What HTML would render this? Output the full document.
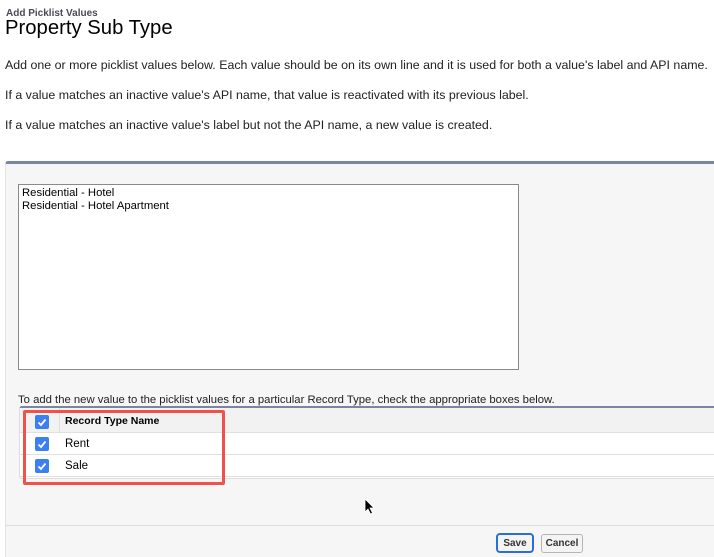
<!DOCTYPE html>
<html><head><style>
body{margin:0;width:714px;height:557px;background:#fff;font-family:"Liberation Sans",Arial,sans-serif;color:#000;position:relative;overflow:hidden}
.a{position:absolute;white-space:nowrap}
p{margin:0}
</style></head><body>
<div class="a" style="left:6px;top:8px;font-size:10px;font-weight:bold;color:#4a4a56">Add Picklist Values</div>
<div class="a" style="left:5px;top:17px;font-size:20.3px">Property Sub Type</div>
<div class="a" style="left:5px;top:58px;font-size:12.4px;color:#222">Add one or more picklist values below. Each value should be on its own line and it is used for both a value's label and API name.</div>
<div class="a" style="left:5px;top:88px;font-size:12.4px;color:#222">If a value matches an inactive value's API name, that value is reactivated with its previous label.</div>
<div class="a" style="left:5px;top:118px;font-size:12.4px;color:#222">If a value matches an inactive value's label but not the API name, a new value is created.</div>
<div class="a" style="left:5px;top:161px;width:709px;height:396px;background:#f6f6f6;border-top:3px solid #7b84a0;border-left:1px solid #e2e2e2;box-sizing:border-box;border-radius:3px 0 0 0"></div>
<div class="a" style="left:18px;top:184px;width:501px;height:186px;background:#fff;border:1px solid #8a8a8a;box-sizing:border-box;font-size:11.3px;padding:2px 3px;line-height:13px">Residential - Hotel<br>Residential - Hotel Apartment</div>
<div class="a" style="left:18px;top:394px;font-size:11.3px;color:#222">To add the new value to the picklist values for a particular Record Type, check the appropriate boxes below.</div>
<div class="a" style="left:19px;top:406px;width:695px;height:73px;background:#fff;border-top:2px solid #7b84a0;border-left:1px solid #ddd;border-bottom:1px solid #ddd;box-sizing:border-box;border-radius:3px 0 0 3px"></div>
<div class="a" style="left:20px;top:408px;width:694px;height:24px;background:#f2f2f2;border-bottom:1px solid #e0e0e0"></div>
<div class="a" style="left:59px;top:408px;width:1px;height:24px;background:#e0e0e0"></div>
<div class="a" style="left:20px;top:454px;width:694px;height:1px;background:#e0e0e0"></div>
<div class="a" style="left:20px;top:476px;width:694px;height:1px;background:#e0e0e0"></div>
<div class="a" style="left:65px;top:415px;font-size:10.5px;font-weight:bold">Record Type Name</div>
<div class="a" style="left:65px;top:438px;font-size:11.5px">Rent</div>
<div class="a" style="left:65px;top:460px;font-size:11.5px">Sale</div>
<svg class="a" style="left:35px;top:415px" width="14" height="14"><rect width="14" height="14" rx="2" fill="#3b7ff0"/><path d="M3.5 7.5l2.5 2.5 4.5-5.5" stroke="#fff" stroke-width="1.8" fill="none"/></svg>
<svg class="a" style="left:35px;top:437px" width="14" height="14"><rect width="14" height="14" rx="2" fill="#3b7ff0"/><path d="M3.5 7.5l2.5 2.5 4.5-5.5" stroke="#fff" stroke-width="1.8" fill="none"/></svg>
<svg class="a" style="left:35px;top:459px" width="14" height="14"><rect width="14" height="14" rx="2" fill="#3b7ff0"/><path d="M3.5 7.5l2.5 2.5 4.5-5.5" stroke="#fff" stroke-width="1.8" fill="none"/></svg>
<div class="a" style="left:23px;top:410px;width:202px;height:75px;border:3px solid #f0514b;box-sizing:border-box;border-radius:2px"></div>
<div class="a" style="left:6px;top:525px;width:708px;height:1px;background:#dcdcdc"></div>
<svg class="a" style="left:364px;top:498px" width="12" height="18"><path d="M1 1v13l3-3 2.5 5 2-1-2.5-5h4z" fill="#000" stroke="#fff" stroke-width=".8"/></svg>
<div class="a" style="left:496px;top:533px;width:38px;height:20px;border:2px solid #2a6fd4;border-radius:4px;background:#f4f4f4;box-sizing:border-box;font-size:10px;font-weight:bold;text-align:center;line-height:18px;color:#333">Save</div>
<div class="a" style="left:541px;top:534px;width:42px;height:19px;border:1px solid #b5b5b5;border-radius:3px;background:#f4f4f4;box-sizing:border-box;font-size:10px;font-weight:bold;text-align:center;line-height:18px;color:#333">Cancel</div>
</body></html>
